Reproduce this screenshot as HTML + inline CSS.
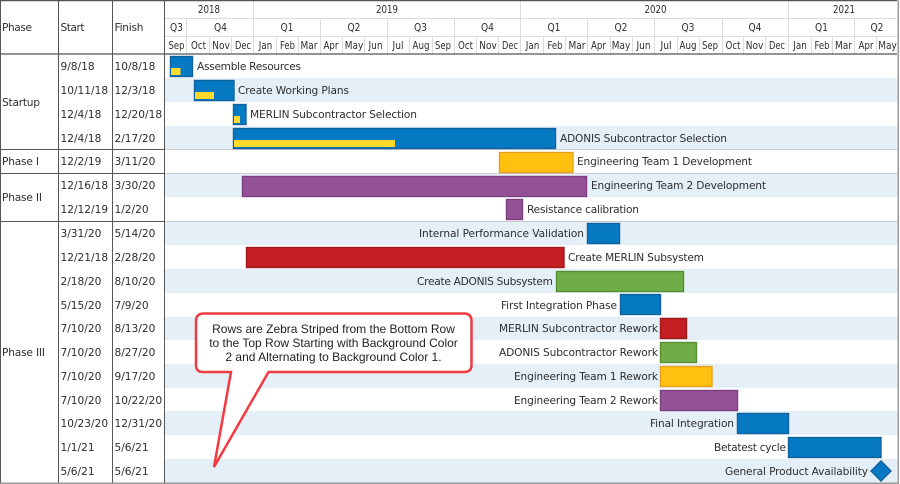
<!DOCTYPE html>
<html><head><meta charset="utf-8"><style>
html,body{margin:0;padding:0;background:#fff;width:900px;height:484px;overflow:hidden}
svg{display:block;filter:blur(.3px)}
text{font-family:"DejaVu Sans","Liberation Sans",sans-serif;font-size:10.6px;fill:#2e2e2e}
.h text{text-anchor:middle;font-size:10.5px}
.c text{font-family:"Liberation Sans",sans-serif;font-size:12px;fill:#222;text-anchor:middle}
</style></head><body>
<svg width="900" height="484" viewBox="0 0 900 484" xmlns="http://www.w3.org/2000/svg">
<g fill="#e5eff7">
<rect x="165" y="78" width="732" height="24"/><rect x="165" y="126" width="732" height="23"/>
<rect x="165" y="173" width="732" height="24"/><rect x="165" y="221" width="732" height="24"/>
<rect x="165" y="269" width="732" height="24"/><rect x="165" y="317" width="732" height="23"/>
<rect x="165" y="364" width="732" height="24"/><rect x="165" y="411" width="732" height="24"/>
<rect x="165" y="459" width="732" height="24"/>
</g>
<g stroke="#ddd" stroke-width="1" fill="none">
<path d="M165 18.5H897M165 36.5H897"/>
<path d="M253.5 1V54M520.5 1V54M788.5 1V54"/>
<path d="M186.500 18V54M320.500 18V54M387.500 18V54M454.500 18V54M587.500 18V54M654.500 18V54M722.500 18V54M854.500 18V54"/>
<path d="M209.500 36V54M231.500 36V54M276.500 36V54M298.500 36V54M342.500 36V54M364.500 36V54M409.500 36V54M432.500 36V54M476.500 36V54M498.500 36V54M543.500 36V54M565.500 36V54M610.500 36V54M632.500 36V54M677.500 36V54M699.500 36V54M743.500 36V54M765.500 36V54M811.500 36V54M832.500 36V54M876.500 36V54"/>
<path d="M165 149.500H897M165 221.500H897" stroke="#ccc"/>
<path d="M165 173.500H897" stroke="#ccc"/>
</g>
<g stroke="#555" stroke-width="1" fill="none">
<path d="M0 .5H897" stroke-width="1.500"/>
<path d="M.5 0V483M58.500 0V483M112.500 0V483M164.500 0V483"/>
<path d="M0 54H897" stroke-width="1.200"/>
<path d="M0 149.500H165M0 173.500H165M0 221.500H165"/>
</g>
<rect x="0" y="482.500" width="899" height="1.500" fill="#999"/>
<rect x="897.500" y="0" width="1.500" height="484" fill="#999"/>

<g class="h" lengthAdjust="spacingAndGlyphs">
<text x="209" y="13" textLength="22" lengthAdjust="spacingAndGlyphs">2018</text><text x="387" y="13" textLength="22" lengthAdjust="spacingAndGlyphs">2019</text><text x="655.500" y="13" textLength="22" lengthAdjust="spacingAndGlyphs">2020</text><text x="844" y="13" textLength="22" lengthAdjust="spacingAndGlyphs">2021</text>
<text x="176.500" y="31" textLength="13" lengthAdjust="spacingAndGlyphs">Q3</text><text x="220.500" y="31" textLength="13" lengthAdjust="spacingAndGlyphs">Q4</text><text x="287" y="31" textLength="13" lengthAdjust="spacingAndGlyphs">Q1</text><text x="354" y="31" textLength="13" lengthAdjust="spacingAndGlyphs">Q2</text><text x="420.500" y="31" textLength="13" lengthAdjust="spacingAndGlyphs">Q3</text><text x="487.500" y="31" textLength="13" lengthAdjust="spacingAndGlyphs">Q4</text><text x="554" y="31" textLength="13" lengthAdjust="spacingAndGlyphs">Q1</text><text x="621" y="31" textLength="13" lengthAdjust="spacingAndGlyphs">Q2</text><text x="688" y="31" textLength="13" lengthAdjust="spacingAndGlyphs">Q3</text><text x="755" y="31" textLength="13" lengthAdjust="spacingAndGlyphs">Q4</text><text x="821.500" y="31" textLength="13" lengthAdjust="spacingAndGlyphs">Q1</text><text x="877" y="31" textLength="13" lengthAdjust="spacingAndGlyphs">Q2</text>
<text x="176.500" y="49" textLength="16" lengthAdjust="spacingAndGlyphs">Sep</text><text x="198.500" y="49" textLength="15" lengthAdjust="spacingAndGlyphs">Oct</text><text x="221" y="49" textLength="17.500" lengthAdjust="spacingAndGlyphs">Nov</text><text x="243" y="49" textLength="16" lengthAdjust="spacingAndGlyphs">Dec</text><text x="265.500" y="49" textLength="13.500" lengthAdjust="spacingAndGlyphs">Jan</text><text x="287.500" y="49" textLength="15" lengthAdjust="spacingAndGlyphs">Feb</text><text x="309" y="49" textLength="17" lengthAdjust="spacingAndGlyphs">Mar</text><text x="331" y="49" textLength="15" lengthAdjust="spacingAndGlyphs">Apr</text><text x="354" y="49" textLength="18.500" lengthAdjust="spacingAndGlyphs">May</text><text x="375.500" y="49" textLength="14" lengthAdjust="spacingAndGlyphs">Jun</text><text x="398" y="49" textLength="11" lengthAdjust="spacingAndGlyphs">Jul</text><text x="421" y="49" textLength="17" lengthAdjust="spacingAndGlyphs">Aug</text><text x="443" y="49" textLength="16" lengthAdjust="spacingAndGlyphs">Sep</text><text x="465.500" y="49" textLength="15" lengthAdjust="spacingAndGlyphs">Oct</text><text x="488" y="49" textLength="17.500" lengthAdjust="spacingAndGlyphs">Nov</text><text x="510" y="49" textLength="16" lengthAdjust="spacingAndGlyphs">Dec</text><text x="532.500" y="49" textLength="13.500" lengthAdjust="spacingAndGlyphs">Jan</text><text x="555" y="49" textLength="15" lengthAdjust="spacingAndGlyphs">Feb</text><text x="577" y="49" textLength="17" lengthAdjust="spacingAndGlyphs">Mar</text><text x="598.500" y="49" textLength="15" lengthAdjust="spacingAndGlyphs">Apr</text><text x="621" y="49" textLength="18.500" lengthAdjust="spacingAndGlyphs">May</text><text x="643.500" y="49" textLength="14" lengthAdjust="spacingAndGlyphs">Jun</text><text x="666" y="49" textLength="11" lengthAdjust="spacingAndGlyphs">Jul</text><text x="688" y="49" textLength="17" lengthAdjust="spacingAndGlyphs">Aug</text><text x="710" y="49" textLength="16" lengthAdjust="spacingAndGlyphs">Sep</text><text x="733" y="49" textLength="15" lengthAdjust="spacingAndGlyphs">Oct</text><text x="754.500" y="49" textLength="17.500" lengthAdjust="spacingAndGlyphs">Nov</text><text x="777" y="49" textLength="16" lengthAdjust="spacingAndGlyphs">Dec</text><text x="800" y="49" textLength="13.500" lengthAdjust="spacingAndGlyphs">Jan</text><text x="822" y="49" textLength="15" lengthAdjust="spacingAndGlyphs">Feb</text><text x="843.500" y="49" textLength="17" lengthAdjust="spacingAndGlyphs">Mar</text><text x="866" y="49" textLength="15" lengthAdjust="spacingAndGlyphs">Apr</text><text x="887.500" y="49" textLength="18.500" lengthAdjust="spacingAndGlyphs">May</text>
</g>

<text x="2" y="31" textLength="30">Phase</text><text x="60.500" y="31" textLength="24">Start</text><text x="114.500" y="31" textLength="29">Finish</text>
<text x="2" y="106" textLength="38">Startup</text><text x="2" y="165" textLength="37">Phase I</text><text x="2" y="201" textLength="40">Phase II</text><text x="2" y="356" textLength="43">Phase III</text>

<g>
<text x="60.500" y="70">9/8/18</text><text x="114.500" y="70">10/8/18</text>
<text x="60.500" y="94">10/11/18</text><text x="114.500" y="94">12/3/18</text>
<text x="60.500" y="118">12/4/18</text><text x="114.500" y="118">12/20/18</text>
<text x="60.500" y="142">12/4/18</text><text x="114.500" y="142">2/17/20</text>
<text x="60.500" y="165">12/2/19</text><text x="114.500" y="165">3/11/20</text>
<text x="60.500" y="189">12/16/18</text><text x="114.500" y="189">3/30/20</text>
<text x="60.500" y="213">12/12/19</text><text x="114.500" y="213">1/2/20</text>
<text x="60.500" y="237">3/31/20</text><text x="114.500" y="237">5/14/20</text>
<text x="60.500" y="261">12/21/18</text><text x="114.500" y="261">2/28/20</text>
<text x="60.500" y="285">2/18/20</text><text x="114.500" y="285">8/10/20</text>
<text x="60.500" y="309">5/15/20</text><text x="114.500" y="309">7/9/20</text>
<text x="60.500" y="332">7/10/20</text><text x="114.500" y="332">8/13/20</text>
<text x="60.500" y="356">7/10/20</text><text x="114.500" y="356">8/27/20</text>
<text x="60.500" y="380">7/10/20</text><text x="114.500" y="380">9/17/20</text>
<text x="60.500" y="404">7/10/20</text><text x="114.500" y="404">10/22/20</text>
<text x="60.500" y="427">10/23/20</text><text x="114.500" y="427">12/31/20</text>
<text x="60.500" y="451">1/1/21</text><text x="114.500" y="451">5/6/21</text>
<text x="60.500" y="475">5/6/21</text><text x="114.500" y="475">5/6/21</text>
</g>

<g stroke-width="1.400">
<g fill="#0579c1" stroke="#12619f">
<rect x="170.500" y="56.500" width="22" height="20"/><rect x="194.500" y="80.500" width="39.500" height="20"/><rect x="233.500" y="104.500" width="12.500" height="20"/><rect x="233.500" y="128.500" width="322" height="20"/>
<rect x="587.500" y="223.500" width="32" height="20"/><rect x="620.500" y="294.500" width="40" height="20"/><rect x="737.500" y="413.500" width="51" height="20"/><rect x="788.500" y="437.500" width="92.500" height="20"/>
</g>
<g fill="#ffd92b" stroke="none">
<rect x="171" y="68" width="9.500" height="7"/><rect x="195" y="92" width="19" height="7"/><rect x="234" y="116" width="6" height="7"/><rect x="234" y="140" width="161" height="7"/>
</g>
<g fill="#ffc010" stroke="#e5a020">
<rect x="499.500" y="152.500" width="73.500" height="20"/><rect x="660.500" y="366.500" width="51.500" height="20"/>
</g>
<g fill="#955196" stroke="#7b3f80">
<rect x="242.500" y="176.500" width="344" height="20"/><rect x="506.500" y="199.500" width="16" height="20"/><rect x="660.500" y="390.500" width="77" height="20"/>
</g>
<g fill="#c41f22" stroke="#a01a1c">
<rect x="246.500" y="247.500" width="317.500" height="20"/><rect x="660.500" y="318.500" width="26" height="20"/>
</g>
<g fill="#70ad47" stroke="#559034">
<rect x="556.500" y="271.500" width="127" height="20"/><rect x="660.500" y="342.500" width="36" height="20"/>
</g>
<path d="M881 461L891 471L881 481L871 471Z" fill="#0579c1" stroke="#12619f"/>
</g>

<text x="197" y="70" textLength="104">Assemble Resources</text>
<text x="238" y="94" textLength="111">Create Working Plans</text>
<text x="250" y="118" textLength="167">MERLIN Subcontractor Selection</text>
<text x="560" y="142" textLength="167">ADONIS Subcontractor Selection</text>
<text x="577" y="165" textLength="175">Engineering Team 1 Development</text>
<text x="591" y="189" textLength="175">Engineering Team 2 Development</text>
<text x="527" y="213" textLength="112">Resistance calibration</text>
<text x="419" y="237" textLength="165">Internal Performance Validation</text>
<text x="568" y="261" textLength="136">Create MERLIN Subsystem</text>
<text x="417" y="285" textLength="136">Create ADONIS Subsystem</text>
<text x="501" y="309" textLength="116">First Integration Phase</text>
<text x="499" y="332" textLength="159">MERLIN Subcontractor Rework</text>
<text x="499" y="356" textLength="159">ADONIS Subcontractor Rework</text>
<text x="514" y="380" textLength="144">Engineering Team 1 Rework</text>
<text x="514" y="404" textLength="144">Engineering Team 2 Rework</text>
<text x="650" y="427" textLength="84">Final Integration</text>
<text x="714" y="451" textLength="72">Betatest cycle</text>
<text x="725" y="475" textLength="143">General Product Availability</text>

<path d="M204 313.500H464Q471.500 313.500 471.500 321V365Q471.500 372 464 372H268.500L214 467L231 372H203Q196 372 196 365V321Q196 313.500 204 313.500Z" fill="#fff" stroke="#f23a42" stroke-width="2.500"/>
<g class="c">
<text x="333.500" y="333">Rows are Zebra Striped from the Bottom Row</text>
<text x="333.500" y="347">to the Top Row Starting with Background Color</text>
<text x="333.500" y="361">2 and Alternating to Background Color 1.</text>
</g>
</svg>
</body></html>
